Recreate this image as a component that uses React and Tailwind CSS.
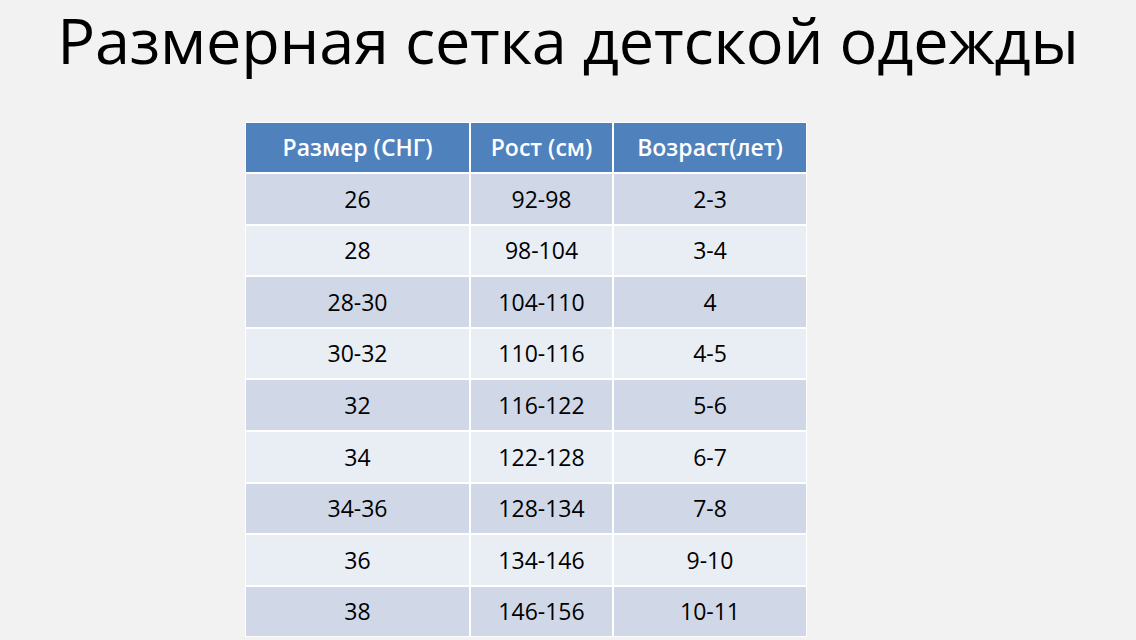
export default function App() {
  const rows = [
    ["26", "92-98", "2-3"],
    ["28", "98-104", "3-4"],
    ["28-30", "104-110", "4"],
    ["30-32", "110-116", "4-5"],
    ["32", "116-122", "5-6"],
    ["34", "122-128", "6-7"],
    ["34-36", "128-134", "7-8"],
    ["36", "134-146", "9-10"],
    ["38", "146-156", "10-11"],
  ];
  return (
    <div className="w-[1136px] h-[640px] overflow-hidden bg-[#f2f2f2] flex flex-col" style={{ fontFamily: '"Open Sans", "DejaVu Sans", sans-serif' }}>
      <h1 className="text-center text-black text-[63px] leading-[80px] tracking-[-0.2px]">
        Размерная сетка детской одежды
      </h1>
      <div className="ml-[245px] mt-[42px] w-[562px] bg-white p-[1px] grid grid-cols-[223px_141px_192px] gap-[2px]">
        {["Размер (СНГ)", "Рост (см)", "Возраст(лет)"].map((h) => (
          <div key={h} className="h-[49px] bg-[#4f81bd] text-white font-semibold text-[23px] flex items-center justify-center">
            {h}
          </div>
        ))}
        {rows.map((r, i) =>
          r.map((c, j) => (
            <div
              key={i + "-" + j}
              className={`h-[49.6px] flex items-center justify-center text-black text-[23px] ${i % 2 === 0 ? "bg-[#d0d8e8]" : "bg-[#e9edf4]"}`}
            >
              {c}
            </div>
          ))
        )}
      </div>
    </div>
  );
}
